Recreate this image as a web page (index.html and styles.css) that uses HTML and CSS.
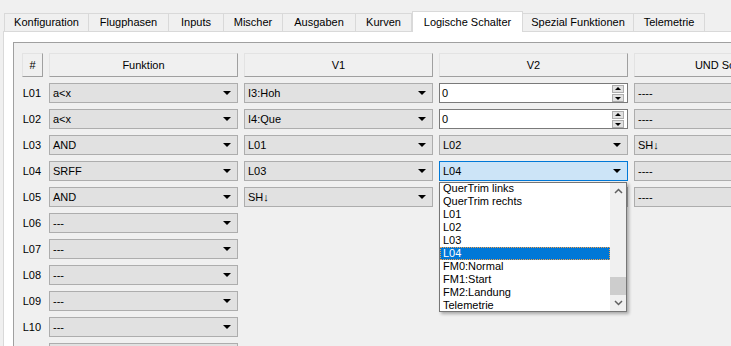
FILE: index.html
```html
<!DOCTYPE html>
<html lang="de">
<head>
    <meta charset="UTF-8">
    <title>Logische Schalter</title>
    <link rel="stylesheet" href="styles.css">
</head>
<body>
    <div class="tabs">
        <div class="tab tab-konf">Konfiguration</div>
        <div class="tab tab-flug">Flugphasen</div>
        <div class="tab tab-inputs">Inputs</div>
        <div class="tab tab-mischer">Mischer</div>
        <div class="tab tab-ausgaben">Ausgaben</div>
        <div class="tab tab-kurven">Kurven</div>
        <div class="tab tab-logic active">Logische Schalter</div>
        <div class="tab tab-spezial">Spezial Funktionen</div>
        <div class="tab tab-tele">Telemetrie</div>
    </div>

    <div class="panel">
        <div class="frame">
            <div class="grid">
                <div class="hdr hdr-num">#</div>
                <div class="hdr">Funktion</div>
                <div class="hdr">V1</div>
                <div class="hdr">V2</div>
                <div class="hdr">UND Schalter</div>

                <div class="lbl">L01</div>
                <div class="combo">a&lt;x</div>
                <div class="combo">I3:Hoh</div>
                <div class="spin">
                    <span>0</span>
                    <div class="spin-btns">
                        <div class="spin-btn up"></div>
                        <div class="spin-btn down"></div>
                    </div>
                </div>
                <div class="combo">----</div>

                <div class="lbl">L02</div>
                <div class="combo">a&lt;x</div>
                <div class="combo">I4:Que</div>
                <div class="spin">
                    <span>0</span>
                    <div class="spin-btns">
                        <div class="spin-btn up"></div>
                        <div class="spin-btn down"></div>
                    </div>
                </div>
                <div class="combo">----</div>

                <div class="lbl">L03</div>
                <div class="combo">AND</div>
                <div class="combo">L01</div>
                <div class="combo">L02</div>
                <div class="combo">SH↓</div>

                <div class="lbl">L04</div>
                <div class="combo">SRFF</div>
                <div class="combo">L03</div>
                <div class="combo open">L04
                    <div class="popup">
                        <ul class="popup-list">
                            <li>QuerTrim links</li>
                            <li>QuerTrim rechts</li>
                            <li>L01</li>
                            <li>L02</li>
                            <li>L03</li>
                            <li class="selected">L04</li>
                            <li>FM0:Normal</li>
                            <li>FM1:Start</li>
                            <li>FM2:Landung</li>
                            <li>Telemetrie</li>
                        </ul>
                        <div class="scrollbar">
                            <div class="sb-btn">
                                <svg width="9" height="6" viewBox="0 0 9 6"><polyline points="1,5 4.5,1.5 8,5" fill="none" stroke="#606060" stroke-width="1.5"/></svg>
                            </div>
                            <div class="sb-track"></div>
                            <div class="sb-thumb"></div>
                            <div class="sb-btn">
                                <svg width="9" height="6" viewBox="0 0 9 6"><polyline points="1,1 4.5,4.5 8,1" fill="none" stroke="#606060" stroke-width="1.5"/></svg>
                            </div>
                        </div>
                    </div>
                </div>
                <div class="combo">----</div>

                <div class="lbl">L05</div>
                <div class="combo">AND</div>
                <div class="combo">SH↓</div>
                <div class="combo">----</div>
                <div class="combo">----</div>

                <div class="lbl">L06</div>
                <div class="combo">---</div>
                <div class="empty"></div><div class="empty"></div><div class="empty"></div>

                <div class="lbl">L07</div>
                <div class="combo">---</div>
                <div class="empty"></div><div class="empty"></div><div class="empty"></div>

                <div class="lbl">L08</div>
                <div class="combo">---</div>
                <div class="empty"></div><div class="empty"></div><div class="empty"></div>

                <div class="lbl">L09</div>
                <div class="combo">---</div>
                <div class="empty"></div><div class="empty"></div><div class="empty"></div>

                <div class="lbl">L10</div>
                <div class="combo">---</div>
                <div class="empty"></div><div class="empty"></div><div class="empty"></div>

                <!-- next row only peeks in at the bottom edge -->
                <div class="lbl"></div>
                <div class="combo"></div>
                <div class="empty"></div><div class="empty"></div><div class="empty"></div>
            </div>
        </div>
    </div>
</body>
</html>
```

FILE: styles.css
```css
:root {
    --win-bg: #f0f0f0;
    --tab-border: #d9d9d9;
    --combo-bg: #e1e1e1;
    --combo-border: #adadad;
    --accent: #0078d7;
}

* {
    box-sizing: border-box;
    margin: 0;
    padding: 0;
}

html, body {
    width: 731px;
    height: 346px;
    overflow: hidden;
}

body {
    font-family: 'Liberation Sans', Arial, sans-serif;
    font-size: 11px;
    color: #000;
    background: var(--win-bg);
}

/* tab bar */
.tabs {
    display: flex;
    align-items: flex-end;
    height: 31px;
    padding-left: 4px;
}

.tab {
    height: 18px;
    line-height: 17px;
    text-align: center;
    border: 1px solid var(--tab-border);
    border-bottom: none;
    border-left: none;
    background: var(--win-bg);
    white-space: nowrap;
}

.tab-konf { width: 85px; border-left: 1px solid var(--tab-border); }
.tab-flug { width: 80px; }
.tab-inputs { width: 55px; }
.tab-mischer { width: 59px; }
.tab-ausgaben { width: 73px; }
.tab-kurven { width: 56px; }
.tab-logic { width: 111px; }
.tab-spezial { width: 111px; }
.tab-tele { width: 71px; }

.tab.active {
    height: 21px;
    line-height: 20px;
    margin-bottom: -1px;
    background: #fff;
    border-left: 1px solid var(--tab-border);
    position: relative;
    z-index: 2;
}

/* tab page */
.panel {
    margin-left: 3px;
    width: 728px;
    height: 315px;
    background: #fff;
    border: 1px solid var(--tab-border);
    border-right: none;
    border-bottom: none;
    padding: 10px 0 0 9px;
    overflow: hidden;
}

.frame {
    width: 760px;
    height: 380px;
    background: var(--win-bg);
    border: 1px solid #a0a0a0;
    padding-top: 10px;
}

.grid {
    display: grid;
    grid-template-columns: 29px 189px 189px 189px 189px;
    grid-template-rows: 24px;
    grid-auto-rows: 20px;
    column-gap: 6px;
    row-gap: 6px;
}

.hdr {
    display: flex;
    align-items: center;
    justify-content: center;
    background: #f0f0f0;
    border: 1px solid;
    border-color: #e3e3e3 #a0a0a0 #a0a0a0 #e3e3e3;
    white-space: nowrap;
    overflow: hidden;
}

.hdr-num {
    width: 21px;
    justify-self: end;
}

.lbl {
    display: flex;
    align-items: center;
    justify-content: flex-end;
    padding-right: 2px;
}

.combo {
    position: relative;
    display: flex;
    align-items: center;
    padding-left: 3px;
    background: var(--combo-bg);
    border: 1px solid var(--combo-border);
    white-space: nowrap;
}

.combo::after {
    content: "";
    position: absolute;
    right: 6px;
    top: 7px;
    border-top: 4px solid #000;
    border-left: 4px solid transparent;
    border-right: 4px solid transparent;
}

.combo.open {
    background: #cce4f7;
    border-color: var(--accent);
    z-index: 5;
}

.spin {
    display: flex;
    align-items: center;
    justify-content: space-between;
    padding: 0 3px 0 2px;
    background: #fff;
    border: 1px solid #7a7a7a;
}

.spin-btns {
    display: flex;
    flex-direction: column;
    gap: 1px;
}

.spin-btn {
    position: relative;
    width: 12px;
    height: 8px;
    background: var(--combo-bg);
    border: 1px solid var(--combo-border);
}

.spin-btn::after {
    content: "";
    position: absolute;
    left: 2px;
    border-left: 3px solid transparent;
    border-right: 3px solid transparent;
}

.spin-btn.up::after {
    top: 1px;
    border-bottom: 3px solid #000;
}

.spin-btn.down::after {
    top: 2px;
    border-top: 3px solid #000;
}

/* dropdown list of the open combo box */
.popup {
    position: absolute;
    left: -1px;
    top: calc(100% + 2px);
    width: 188px;
    height: 130px;
    display: flex;
    background: #fff;
    border: 1px solid #767676;
    box-shadow: 2px 2px 3px rgba(0, 0, 0, 0.3);
    overflow: hidden;
}

.popup-list {
    list-style: none;
    flex: 1;
    margin-top: -1px;
}

.popup-list li {
    height: 13px;
    line-height: 13px;
    padding-left: 3px;
}

.popup-list li.selected {
    background: var(--accent);
    color: #fff;
    outline: 1px dotted #f5a04a;
    outline-offset: -1px;
}

.scrollbar {
    width: 16px;
    display: flex;
    flex-direction: column;
    background: var(--win-bg);
}

.sb-btn {
    height: 16px;
    display: flex;
    align-items: center;
    justify-content: center;
}

.sb-track {
    flex: 1;
}

.sb-thumb {
    height: 18px;
    background: #cdcdcd;
}
```
